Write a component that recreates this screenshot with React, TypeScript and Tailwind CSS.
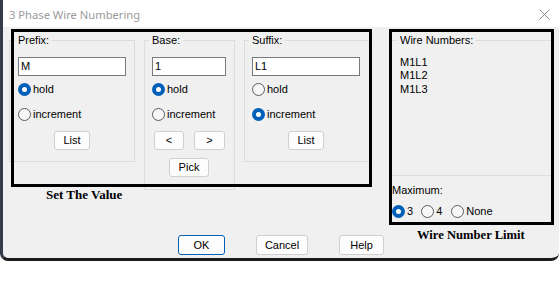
import React from "react";

function Radio({ checked, label, className = "" }: { checked?: boolean; label: string; className?: string }) {
  return (
    <div className={"flex items-center h-[13px] " + className}>
      {checked ? (
        <span className="w-[13px] h-[13px] shrink-0 rounded-full bg-[#005fb8] flex items-center justify-center">
          <span className="w-[5px] h-[5px] rounded-full bg-white" />
        </span>
      ) : (
        <span className="w-[13px] h-[13px] shrink-0 rounded-full border border-[#5c5c5c] bg-[#f7f7f7]" />
      )}
      <span className="ml-[2px] leading-[13px]">{label}</span>
    </div>
  );
}

function Btn({ label, className = "" }: { label: string; className?: string }) {
  return (
    <div
      className={
        "h-[19px] flex items-center justify-center bg-[#fdfdfd] border border-[#d0d0d0] rounded-[3px] leading-[13px] " +
        className
      }
    >
      {label}
    </div>
  );
}

function Field({ value, className = "" }: { value: string; className?: string }) {
  return (
    <div
      className={
        "h-[19px] bg-white border border-[#7a7a7a] flex items-center pl-[2px] leading-[13px] " + className
      }
    >
      {value}
    </div>
  );
}

export default function App() {
  return (
    <div
      className="relative w-[559px] h-[297px] bg-white overflow-hidden text-black text-[11px]"
      style={{ fontFamily: '"Liberation Sans", Arial, sans-serif' }}
    >
      {/* window */}
      <div className="w-[559px] h-[261px] bg-[#f0f0f0] border-l-[3px] border-l-[#353c48] border-b-[3px] border-b-[#1c1c1c] rounded-bl-[8px] rounded-br-[8px] flex flex-col">
        {/* title bar */}
        <div className="h-[27px] bg-white flex items-start justify-between pl-[6px] pr-[9px]">
          <div
            className="pt-[7px] leading-[16px] text-[11.2px] text-[#9a9a9a]"
            style={{ fontFamily: '"Noto Sans", "Open Sans", sans-serif' }}
          >
            3 Phase Wire Numbering
          </div>
          <svg width="11" height="11" viewBox="0 0 11 11" className="mt-[9px]">
            <path d="M0.5 0.5 L10.5 10.5 M10.5 0.5 L0.5 10.5" stroke="#8c8c8c" strokeWidth="1" fill="none" />
          </svg>
        </div>

        {/* body */}
        <div className="flex items-start pt-[7px] pl-[6px]">
          {/* left groups */}
          <div className="flex items-start gap-[9px]">
            <fieldset className="w-[126px] h-[128px] border border-[#dcdcdc] pl-[8px] pr-[8px]">
              <legend className="-ml-[3px] px-[3px] leading-[13px]">Prefix:</legend>
              <Field value="M" className="mt-[10px] w-[108px]" />
              <Radio checked label="hold" className="mt-[7px]" />
              <Radio label="increment" className="mt-[12px]" />
              <Btn label="List" className="mt-[10px] w-[36px] mx-auto" />
            </fieldset>

            <fieldset className="w-[91px] h-[156px] border border-[#dcdcdc] pl-[7px] pr-[8px]">
              <legend className="-ml-[3px] px-[3px] leading-[13px]">Base:</legend>
              <Field value="1" className="mt-[10px] w-[74px]" />
              <Radio checked label="hold" className="mt-[7px]" />
              <Radio label="increment" className="mt-[12px]" />
              <div className="mt-[10px] ml-[2px] flex gap-[10px]">
                <Btn label="<" className="w-[30px]" />
                <Btn label=">" className="w-[31px]" />
              </div>
              <Btn label="Pick" className="mt-[8px] w-[40px] mx-auto" />
            </fieldset>

            <fieldset className="w-[126px] h-[128px] border border-[#dcdcdc] pl-[7px] pr-[9px]">
              <legend className="-ml-[3px] px-[3px] leading-[13px]">Suffix:</legend>
              <Field value="L1" className="mt-[10px] w-[108px]" />
              <Radio label="hold" className="mt-[7px]" />
              <Radio checked label="increment" className="mt-[12px]" />
              <Btn label="List" className="mt-[10px] w-[36px] mx-auto" />
            </fieldset>
          </div>

          {/* right column */}
          <div className="ml-[21px] flex flex-col">
            <fieldset className="w-[161px] h-[142px] border border-[#dcdcdc] pl-[8px]">
              <legend className="-ml-[3px] px-[3px] leading-[13px]">Wire Numbers:</legend>
              <div className="mt-[9px] leading-[13.4px]">
                <div>M1L1</div>
                <div>M1L2</div>
                <div>M1L3</div>
              </div>
            </fieldset>
            <div className="mt-[8px] pl-[1px] leading-[13px]">Maximum:</div>
            <div className="mt-[8px] pl-[1px] flex items-center">
              <Radio checked label="3" className="" />
              <Radio label="4" className="ml-[8px]" />
              <Radio label="None" className="ml-[9px]" />
            </div>
          </div>
        </div>

        {/* bottom buttons */}
        <div className="mt-[17px] pl-[175px] flex items-center gap-[31px]">
          <div className="w-[47px] h-[20px] flex items-center justify-center bg-[#fdfdfd] border border-[#005fb8] rounded-[3px]">
            OK
          </div>
          <div className="w-[52px] h-[20px] flex items-center justify-center bg-[#fdfdfd] border border-[#d0d0d0] rounded-[3px]">
            Cancel
          </div>
          <div className="w-[45px] h-[20px] flex items-center justify-center bg-[#fdfdfd] border border-[#d0d0d0] rounded-[3px]">
            Help
          </div>
        </div>
      </div>

      {/* annotation overlays */}
      <div className="absolute left-[11px] top-[29px] w-[361px] h-[158px] border-[3px] border-black pointer-events-none" />
      <div className="absolute left-[389px] top-[29px] w-[165px] h-[196px] border-[3px] border-black pointer-events-none" />
      <div
        className="absolute left-[46px] top-[187px] text-[13px] leading-[15px] font-bold"
        style={{ fontFamily: '"Liberation Serif", "Times New Roman", serif' }}
      >
        Set The Value
      </div>
      <div
        className="absolute left-[417px] top-[228px] text-[12.6px] leading-[15px] font-bold"
        style={{ fontFamily: '"Liberation Serif", "Times New Roman", serif' }}
      >
        Wire Number Limit
      </div>
    </div>
  );
}
